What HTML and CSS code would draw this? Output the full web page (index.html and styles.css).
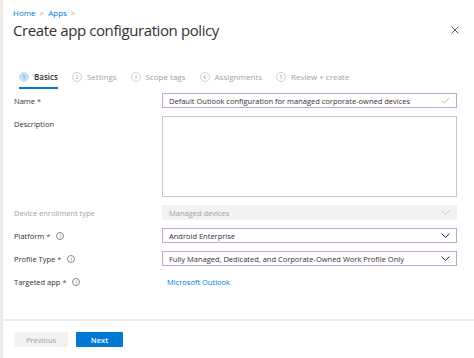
FILE: index.html
```html
<!DOCTYPE html>
<html lang="en">
<head>
    <meta charset="UTF-8">
    <title>Create app configuration policy</title>
    <link rel="stylesheet" href="styles.css">
</head>
<body>
    <div class="blade">
        <div class="head">
            <div class="crumbs">
                <a href="#">Home</a><span class="sep">&gt;</span><a href="#">Apps</a><span class="sep">&gt;</span>
            </div>
            <div class="title-row">
                <h1>Create app configuration policy</h1>
                <svg class="close" width="8" height="8" viewBox="0 0 8 8"><path d="M.5 .5 L7.5 7.5 M7.5 .5 L.5 7.5" stroke="#605e5c" stroke-width="1"/></svg>
            </div>
        </div>

        <div class="steps">
            <div class="step active"><span class="num">1</span>Basics</div>
            <div class="step"><span class="num">2</span>Settings</div>
            <div class="step"><span class="num">3</span>Scope tags</div>
            <div class="step"><span class="num">4</span>Assignments</div>
            <div class="step"><span class="num">5</span>Review + create</div>
        </div>

        <div class="form">
            <div class="row">
                <label>Name <span class="req">*</span></label>
                <div class="field focus">
                    <span>Default Outlook configuration for managed corporate-owned devices</span>
                    <svg class="check" width="9" height="7" viewBox="0 0 9 7"><path d="M1 3.8 L3.3 6 L8 1" fill="none" stroke="#a3cf9f" stroke-width="1"/></svg>
                </div>
            </div>
            <div class="row top">
                <label>Description</label>
                <div class="textarea"></div>
            </div>
            <div class="row">
                <label class="muted">Device enrollment type</label>
                <div class="field disabled">
                    <span>Managed devices</span>
                    <svg class="chev" width="9" height="5" viewBox="0 0 9 5"><path d="M.5 .5 L4.5 4.5 L8.5 .5" fill="none" stroke="#c8c6c4" stroke-width="1"/></svg>
                </div>
            </div>
            <div class="row">
                <label>Platform <span class="req">*</span> <span class="info">i</span></label>
                <div class="field focus">
                    <span>Android Enterprise</span>
                    <svg class="chev" width="9" height="5" viewBox="0 0 9 5"><path d="M.5 .5 L4.5 4.5 L8.5 .5" fill="none" stroke="#323130" stroke-width="1"/></svg>
                </div>
            </div>
            <div class="row">
                <label>Profile Type <span class="req">*</span> <span class="info">i</span></label>
                <div class="field focus">
                    <span>Fully Managed, Dedicated, and Corporate-Owned Work Profile Only</span>
                    <svg class="chev" width="9" height="5" viewBox="0 0 9 5"><path d="M.5 .5 L4.5 4.5 L8.5 .5" fill="none" stroke="#323130" stroke-width="1"/></svg>
                </div>
            </div>
            <div class="row">
                <label>Targeted app <span class="req">*</span> <span class="info">i</span></label>
                <a class="link" href="#">Microsoft Outlook</a>
            </div>
        </div>

        <div class="footer">
            <button class="btn prev">Previous</button>
            <button class="btn next">Next</button>
        </div>
    </div>
</body>
</html>
```

FILE: styles.css
```css
body {
    margin: 0;
    font-family: "Open Sans", "Noto Sans", sans-serif;
    color: #323130;
    background: white;
}
.blade {
    height: 358px;
    border-left: 3px solid #ececec;
    box-sizing: border-box;
    display: flex;
    flex-direction: column;
}
.head {
    padding: 6px 0 0 10px;
}
.crumbs {
    font-size: 8px;
    line-height: 13px;
}
.crumbs a {
    color: #0078d4;
    text-decoration: none;
}
.crumbs .sep {
    color: #a19f9d;
    margin: 0 4px;
}
.title-row {
    display: flex;
    align-items: center;
    justify-content: space-between;
    padding-right: 15px;
}
h1 {
    margin: 0;
    font-size: 15px;
    font-weight: 400;
    line-height: 22px;
    letter-spacing: -.4px;
}
.steps {
    display: flex;
    gap: 14px;
    margin: 29px 0 0 16px;
    font-size: 8px;
}
.step {
    display: flex;
    align-items: center;
    gap: 5px;
    color: #a19f9d;
    height: 13px;
    padding-bottom: 4px;
    border-bottom: 2px solid transparent;
}
.step.active {
    color: #323130;
    font-weight: 600;
    border-bottom-color: #0078d4;
}
.num {
    width: 8px;
    height: 8px;
    border-radius: 50%;
    border: 1px solid #d2d0ce;
    font-size: 5px;
    display: flex;
    align-items: center;
    justify-content: center;
    color: #a19f9d;
    font-weight: 400;
}
.step.active .num {
    background: #c7e0f4;
    border-color: #c7e0f4;
    color: #0078d4;
}
.form {
    margin: 4px 17px 0 11px;
    display: flex;
    flex-direction: column;
    gap: 8px;
    font-size: 7.5px;
}
.row {
    display: grid;
    grid-template-columns: 148px 1fr;
    align-items: center;
    min-height: 15px;
}
.row.top {
    align-items: start;
}
.row.top label {
    padding-top: 3px;
}
label.muted {
    color: #a19f9d;
}
.req {
    color: #a4262c;
}
.info {
    display: inline-flex;
    align-items: center;
    justify-content: center;
    width: 6px;
    height: 6px;
    border: 1px solid #8a8886;
    border-radius: 50%;
    font-size: 5px;
    color: #605e5c;
    margin-left: 4px;
    vertical-align: 1px;
}
.field {
    height: 15px;
    box-sizing: border-box;
    display: flex;
    align-items: center;
    justify-content: space-between;
    padding: 0 6px;
    border: 1px solid #8a8886;
}
.field.focus {
    border-color: #c0a4d8;
}
.field.disabled {
    background: #f3f2f1;
    border-color: #f3f2f1;
    color: #a19f9d;
}
.textarea {
    height: 79px;
    border: 1px solid #c8c6c4;
}
.link {
    color: #0078d4;
    text-decoration: none;
    padding-left: 5px;
}
.footer {
    margin-top: auto;
    border-top: 2px solid #edebe9;
    padding: 11px 0 11px 11px;
    display: flex;
    gap: 8px;
}
.btn {
    height: 15px;
    border: none;
    font-family: inherit;
    font-size: 7.5px;
    padding: 0;
    border-radius: 1px;
}
.btn.prev {
    width: 54px;
    background: #f3f2f1;
    color: #a19f9d;
}
.btn.next {
    width: 47px;
    background: #0078d4;
    color: white;
    font-weight: 600;
}
```
